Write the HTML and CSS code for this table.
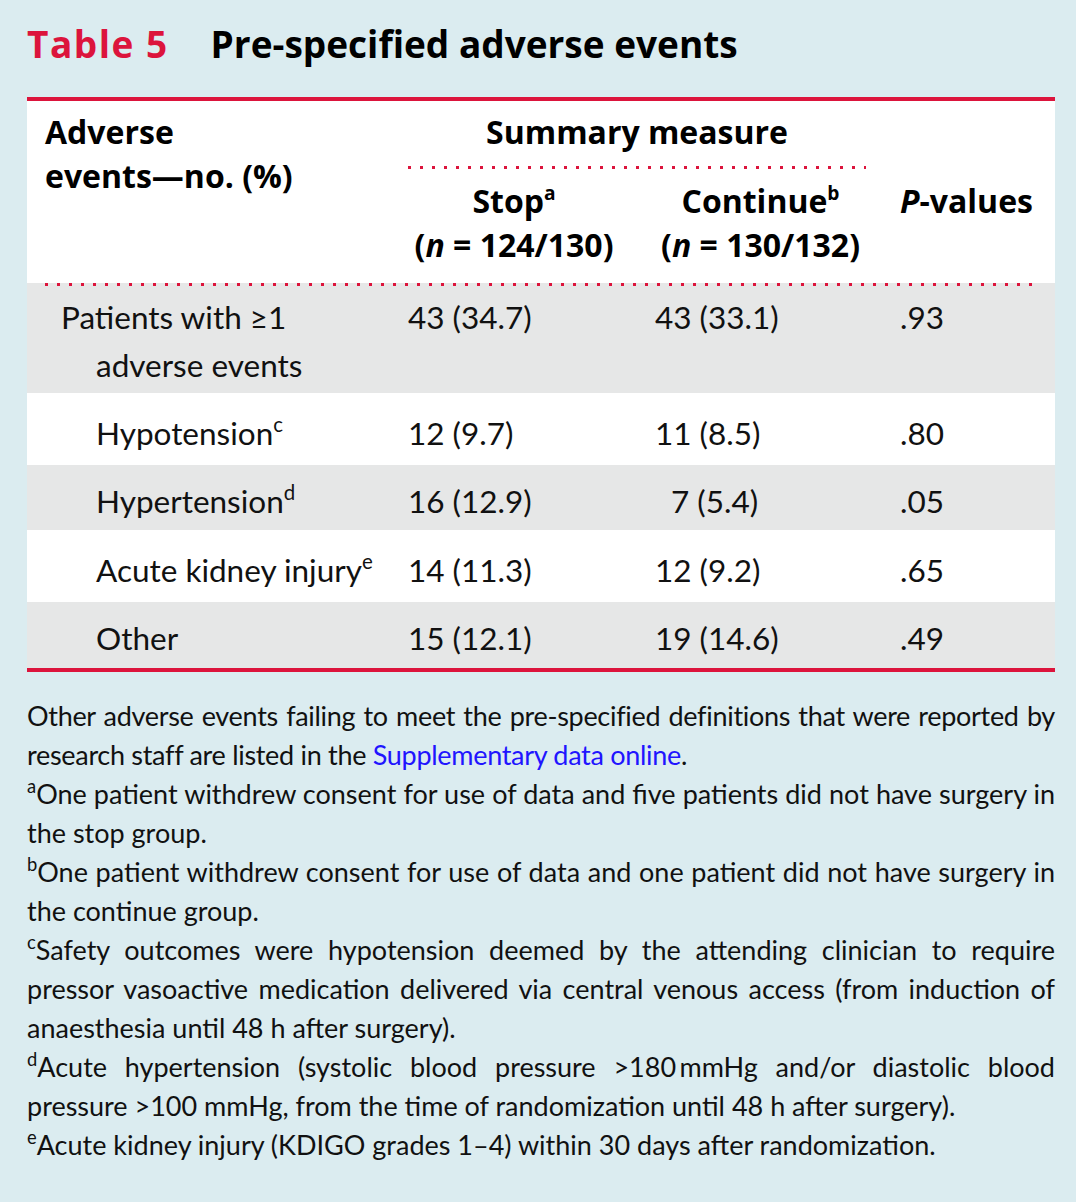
FILE: index.html
```html
<!DOCTYPE html>
<html lang="en">
<head>
<meta charset="utf-8">
<title>Table 5 Pre-specified adverse events</title>
<link rel="stylesheet" href="styles.css">
</head>
<body>
<div class="page">
  <h1 class="title"><span class="label">Table 5</span><span class="caption">Pre-specified adverse events</span></h1>
  <div class="panel">
    <table class="data">
      <colgroup>
        <col class="c1"><col class="c2"><col class="c3"><col class="c4">
      </colgroup>
      <thead>
        <tr class="h1">
          <th class="name" rowspan="2">Adverse<br>events—no. (%)</th>
          <th class="group" colspan="2"><div class="group-label">Summary measure</div><div class="dots"></div></th>
          <th class="blank"></th>
        </tr>
        <tr class="h2">
          <th class="arm a2">Stop<sup>a</sup><br>(<i>n</i> = 124/130)</th>
          <th class="arm a3">Continue<sup>b</sup><br>(<i>n</i> = 130/132)</th>
          <th class="pval"><i>P</i>-values</th>
        </tr>
      </thead>
      <tbody>
        <tr class="rule"><td colspan="4"><div class="dots wide"></div></td></tr>
        <tr class="grey first">
          <td class="name hang">Patients with ≥1<br>adverse events</td>
          <td class="v2">43 (34.7)</td>
          <td class="v3">43 (33.1)</td>
          <td class="v4">.93</td>
        </tr>
        <tr class="white tall">
          <td class="name">Hypotension<sup>c</sup></td>
          <td class="v2">12 (9.7)</td>
          <td class="v3">11 (8.5)</td>
          <td class="v4">.80</td>
        </tr>
        <tr class="grey short">
          <td class="name">Hypertension<sup>d</sup></td>
          <td class="v2">16 (12.9)</td>
          <td class="v3 digit-pad">7 (5.4)</td>
          <td class="v4">.05</td>
        </tr>
        <tr class="white tall">
          <td class="name">Acute kidney injury<sup>e</sup></td>
          <td class="v2">14 (11.3)</td>
          <td class="v3">12 (9.2)</td>
          <td class="v4">.65</td>
        </tr>
        <tr class="grey short last">
          <td class="name">Other</td>
          <td class="v2">15 (12.1)</td>
          <td class="v3">19 (14.6)</td>
          <td class="v4">.49</td>
        </tr>
      </tbody>
    </table>
  </div>
  <div class="notes">
    <p class="lead">Other adverse events failing to meet the pre-specified definitions that were reported by research staff are listed in the <a href="#">Supplementary data online</a>.</p>
    <p><sup>a</sup>One patient withdrew consent for use of data and five patients did not have surgery in the stop group.</p>
    <p><sup>b</sup>One patient withdrew consent for use of data and one patient did not have surgery in the continue group.</p>
    <p><sup>c</sup>Safety outcomes were hypotension deemed by the attending clinician to require pressor vasoactive medication delivered via central venous access (from induction of anaesthesia until 48 h after surgery).</p>
    <p><sup>d</sup>Acute hypertension (systolic blood pressure &gt;180&#8201;mmHg and/or diastolic blood pressure &gt;100 mmHg, from the time of randomization until 48 h after surgery).</p>
    <p><sup>e</sup>Acute kidney injury (KDIGO grades 1–4) within 30 days after randomization.</p>
  </div>
</div>
</body>
</html>
```

FILE: styles.css
```css
* { box-sizing: border-box; }

html, body {
  margin: 0;
  padding: 0;
}

body {
  background: #dbecf0;
  color: #111;
  font-family: "Lato", "Open Sans", "DejaVu Sans", sans-serif;
  width: 1076px;
  height: 1202px;
  overflow: hidden;
}

.page {
  padding: 0 21px 0 27px;
}

.title {
  margin: 0;
  height: 97px;
  display: flex;
  align-items: center;
  gap: 42px;
  font-family: "Open Sans", "Lato", sans-serif;
  font-size: 37px;
  font-weight: 700;
  line-height: 1;
  padding-bottom: 10px;
}

.label {
  color: #dc143c;
  letter-spacing: 1.5px;
}

.caption { color: #000; }

.panel {
  background: #fff;
  border-top: 4px solid #dc143c;
  border-bottom: 4px solid #dc143c;
}

.data {
  width: 100%;
  table-layout: fixed;
  border-collapse: collapse;
  font-size: 31.5px;
}

.c1 { width: 368px; }
.c2 { width: 248px; }
.c3 { width: 245px; }
.c4 { width: 167px; }

.data th {
  font-family: "Open Sans", "Lato", sans-serif;
  font-size: 32px;
  font-weight: 700;
  line-height: 44px;
  vertical-align: top;
  padding: 0;
  color: #000;
}

.data .h1 th { padding-top: 9px; }

.data th.name {
  text-align: left;
  padding-left: 18px;
}

.data th.group {
  padding-left: 13px;
  padding-right: 22px;
  text-align: center;
}

.group-label { line-height: 44px; }

.dots {
  height: 3px;
  margin-top: 12px;
  background-image: repeating-linear-gradient(to right, #dc143c 0 3px, transparent 3px 12px);
}

.data .h2 th { padding-top: 10px; padding-bottom: 16px; }

.data th.arm { text-align: center; }
.data th.a2 { padding-left: 13px; padding-right: 23px; }
.data th.a3 { padding-left: 12px; padding-right: 22px; }

.data th.pval {
  text-align: left;
  padding-left: 12px;
}

.data .rule td {
  padding: 0;
  background: #e6e7e7;
}

.dots.wide {
  margin: 0 19px 0 18px;
  height: 3px;
}

.data td {
  line-height: 48px;
  vertical-align: top;
  font-weight: 400;
  color: #111;
}

.grey td { background: #e6e7e7; }
.white td { background: #fff; }

.data .first td { padding-top: 7px; padding-bottom: 4px; }
.data .tall td { padding-top: 16px; padding-bottom: 8px; }
.data .short td { padding-top: 12px; padding-bottom: 5px; }
.data .last td { padding-bottom: 6px; }

.data td.name { padding-left: 69px; }
.data td.hang { text-indent: -35px; }
.data td.v2 { padding-left: 13px; }
.data td.v3 { padding-left: 12px; }
.data td.v4 { padding-left: 12px; }
.data td.digit-pad { padding-left: 28px; }

sup {
  font-size: 0.65em;
  line-height: 0;
  vertical-align: 0.65em;
}

.data th sup { font-size: 0.6em; vertical-align: 0.7em; }

.notes {
  margin-top: 24px;
  font-size: 27px;
  line-height: 39px;
  color: #111;
  text-align: justify;
}

.notes p { margin: 0; }

.notes .lead { letter-spacing: -0.3px; }

.notes sup {
  font-size: 0.68em;
  vertical-align: 0.6em;
}

.notes a {
  color: #2114ff;
  text-decoration: none;
}
```
